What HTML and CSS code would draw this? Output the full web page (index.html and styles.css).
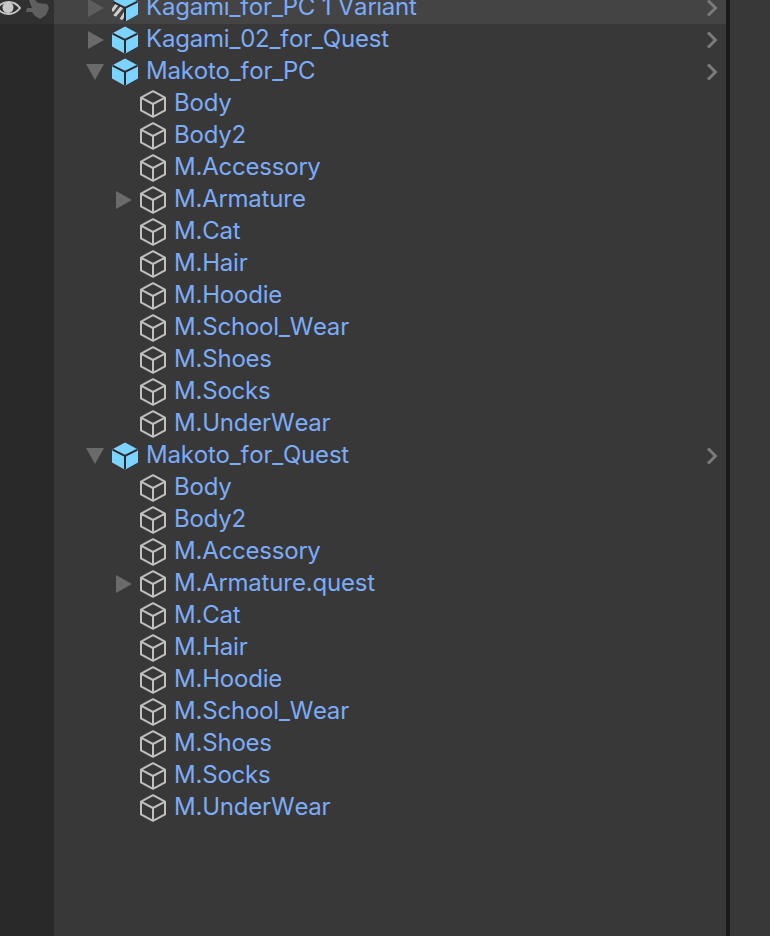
FILE: index.html
```html
<!DOCTYPE html>
<html lang="en">
<head>
    <meta charset="UTF-8">
    <title>Hierarchy</title>
    <link rel="stylesheet" href="styles.css">
</head>
<body>
    <svg class="defs" width="0" height="0">
        <defs>
            <clipPath id="left-face">
                <path d="M0 7.5 L13 14 V27.8 L0 20.5 Z"/>
            </clipPath>
            <symbol id="mesh" viewBox="0 0 26 28">
                <path d="M13 1.2 L25 7.6 V20.4 L13 26.8 L1 20.4 V7.6 Z M1 7.6 L13 14 L25 7.6 M13 14 V26.8" fill="none" stroke="#c0c0c0" stroke-width="2" stroke-linejoin="round"/>
            </symbol>
            <symbol id="prefab" viewBox="0 0 26 28">
                <path d="M13 0.5 L26 7.5 V20.5 L13 27.8 L0 20.5 V7.5 Z" fill="#7dd3ff"/>
                <path d="M0.5 7.6 L13 14 L25.5 7.6 M13 14 V27.5" fill="none" stroke="#2b2b2b" stroke-width="2"/>
            </symbol>
            <symbol id="variant" viewBox="0 0 26 28">
                <path d="M13 14 L26 7.5 V20.5 L13 27.8 Z M0 7.5 L13 0.5 L26 7.5 L13 14 Z" fill="#7dd3ff"/>
                <g clip-path="url(#left-face)" stroke="#cfcfcf" stroke-width="3">
                    <path d="M0 17 L6 9 M1 24 L10 13 M8 27 L13 19"/>
                </g>
                <path d="M0.5 7.6 L13 14 L25.5 7.6 M13 14 V27.5" fill="none" stroke="#2b2b2b" stroke-width="2"/>
            </symbol>
            <symbol id="chevron" viewBox="0 0 12 18">
                <path d="M2 1.5 L9.5 9 L2 16.5" fill="none" stroke="#7a7a7a" stroke-width="3"/>
            </symbol>
        </defs>
    </svg>

    <div class="window">
        <div class="gutter">
            <div class="gutter-top">
                <svg class="eye" width="22" height="18" viewBox="0 0 22 18">
                    <path d="M-3 8 C3 0 14 0 20 8 C14 16 3 16 -3 8 Z" fill="none" stroke="#c8c8c8" stroke-width="2"/>
                    <circle cx="8" cy="7.5" r="5.5" fill="#c8c8c8"/>
                </svg>
                <svg class="hand" width="24" height="20" viewBox="0 0 24 20">
                    <path d="M3 0 L9 0 L12 3 L21 4 L23 8 L20 15 L14 19 L9 16 L6 12 L0 12 L1 8 L6 8 Z" fill="#5f5f5f"/>
                </svg>
            </div>
        </div>

        <div class="tree">
            <div class="row root hover">
                <span class="arrow right faded"></span>
                <svg class="cube"><use href="#variant"/></svg>
                <span class="name">Kagami_for_PC 1 Variant</span>
                <svg class="chevron"><use href="#chevron"/></svg>
            </div>
            <div class="row root">
                <span class="arrow right"></span>
                <svg class="cube"><use href="#prefab"/></svg>
                <span class="name">Kagami_02_for_Quest</span>
                <svg class="chevron"><use href="#chevron"/></svg>
            </div>
            <div class="row root">
                <span class="arrow down"></span>
                <svg class="cube"><use href="#prefab"/></svg>
                <span class="name">Makoto_for_PC</span>
                <svg class="chevron"><use href="#chevron"/></svg>
            </div>
            <div class="row child"><span class="arrow"></span><svg class="cube"><use href="#mesh"/></svg><span class="name">Body</span></div>
            <div class="row child"><span class="arrow"></span><svg class="cube"><use href="#mesh"/></svg><span class="name">Body2</span></div>
            <div class="row child"><span class="arrow"></span><svg class="cube"><use href="#mesh"/></svg><span class="name">M.Accessory</span></div>
            <div class="row child"><span class="arrow right"></span><svg class="cube"><use href="#mesh"/></svg><span class="name">M.Armature</span></div>
            <div class="row child"><span class="arrow"></span><svg class="cube"><use href="#mesh"/></svg><span class="name">M.Cat</span></div>
            <div class="row child"><span class="arrow"></span><svg class="cube"><use href="#mesh"/></svg><span class="name">M.Hair</span></div>
            <div class="row child"><span class="arrow"></span><svg class="cube"><use href="#mesh"/></svg><span class="name">M.Hoodie</span></div>
            <div class="row child"><span class="arrow"></span><svg class="cube"><use href="#mesh"/></svg><span class="name">M.School_Wear</span></div>
            <div class="row child"><span class="arrow"></span><svg class="cube"><use href="#mesh"/></svg><span class="name">M.Shoes</span></div>
            <div class="row child"><span class="arrow"></span><svg class="cube"><use href="#mesh"/></svg><span class="name">M.Socks</span></div>
            <div class="row child"><span class="arrow"></span><svg class="cube"><use href="#mesh"/></svg><span class="name">M.UnderWear</span></div>
            <div class="row root">
                <span class="arrow down"></span>
                <svg class="cube"><use href="#prefab"/></svg>
                <span class="name">Makoto_for_Quest</span>
                <svg class="chevron"><use href="#chevron"/></svg>
            </div>
            <div class="row child"><span class="arrow"></span><svg class="cube"><use href="#mesh"/></svg><span class="name">Body</span></div>
            <div class="row child"><span class="arrow"></span><svg class="cube"><use href="#mesh"/></svg><span class="name">Body2</span></div>
            <div class="row child"><span class="arrow"></span><svg class="cube"><use href="#mesh"/></svg><span class="name">M.Accessory</span></div>
            <div class="row child"><span class="arrow right"></span><svg class="cube"><use href="#mesh"/></svg><span class="name">M.Armature.quest</span></div>
            <div class="row child"><span class="arrow"></span><svg class="cube"><use href="#mesh"/></svg><span class="name">M.Cat</span></div>
            <div class="row child"><span class="arrow"></span><svg class="cube"><use href="#mesh"/></svg><span class="name">M.Hair</span></div>
            <div class="row child"><span class="arrow"></span><svg class="cube"><use href="#mesh"/></svg><span class="name">M.Hoodie</span></div>
            <div class="row child"><span class="arrow"></span><svg class="cube"><use href="#mesh"/></svg><span class="name">M.School_Wear</span></div>
            <div class="row child"><span class="arrow"></span><svg class="cube"><use href="#mesh"/></svg><span class="name">M.Shoes</span></div>
            <div class="row child"><span class="arrow"></span><svg class="cube"><use href="#mesh"/></svg><span class="name">M.Socks</span></div>
            <div class="row child"><span class="arrow"></span><svg class="cube"><use href="#mesh"/></svg><span class="name">M.UnderWear</span></div>
        </div>

        <div class="side"></div>
    </div>
</body>
</html>
```

FILE: styles.css
```css
* {
    margin: 0;
    padding: 0;
    box-sizing: border-box;
}

html, body {
    height: 100%;
    overflow: hidden;
}

body {
    font-family: "Inter", "Noto Sans", sans-serif;
    background: #383838;
}

.defs {
    display: block;
    height: 0;
}

.window {
    display: flex;
    height: 936px;
}

/* visibility / picking column */
.gutter {
    flex: 0 0 54px;
    background-color: #292929;
    background-image: radial-gradient(circle, #303030 0.6px, transparent 1px),
                      radial-gradient(circle, #303030 0.6px, transparent 1px);
    background-size: 16px 16px;
    background-position: 0 0, 8px 8px;
}

.gutter-top {
    display: flex;
    align-items: flex-start;
    justify-content: space-between;
    height: 24px;
    padding-right: 4px;
    background: #303030;
}

.tree {
    flex: 0 0 672px;
    margin-top: -8px;
    overflow: hidden;
}

.side {
    flex: 0 0 44px;
    border-left: 4px solid #191919;
}

.row {
    display: flex;
    align-items: center;
    height: 32px;
    font-size: 24px;
    font-kerning: none;
    letter-spacing: -0.2px;
    color: #7cacf8;
}

.row.root {
    padding-left: 28px;
}

.row.child {
    padding-left: 56px;
}

.row.hover {
    background: #444444;
}

.arrow {
    flex: 0 0 30px;
    display: flex;
    justify-content: center;
    align-items: center;
}

.arrow.right::before {
    content: "";
    margin-left: -2px;
    border-left: 16px solid #6a6a6a;
    border-top: 9px solid transparent;
    border-bottom: 9px solid transparent;
}

.arrow.down::before {
    content: "";
    margin-left: -4px;
    border-top: 16px solid #6a6a6a;
    border-left: 9px solid transparent;
    border-right: 9px solid transparent;
}

.arrow.faded {
    opacity: 0.7;
}

.cube {
    flex: 0 0 26px;
    width: 26px;
    height: 28px;
    margin-right: 8px;
}

.name {
    flex: 1;
    margin-bottom: 4px;
    white-space: nowrap;
}

.chevron {
    flex: 0 0 12px;
    width: 12px;
    height: 18px;
    margin-right: 8px;
}
```
